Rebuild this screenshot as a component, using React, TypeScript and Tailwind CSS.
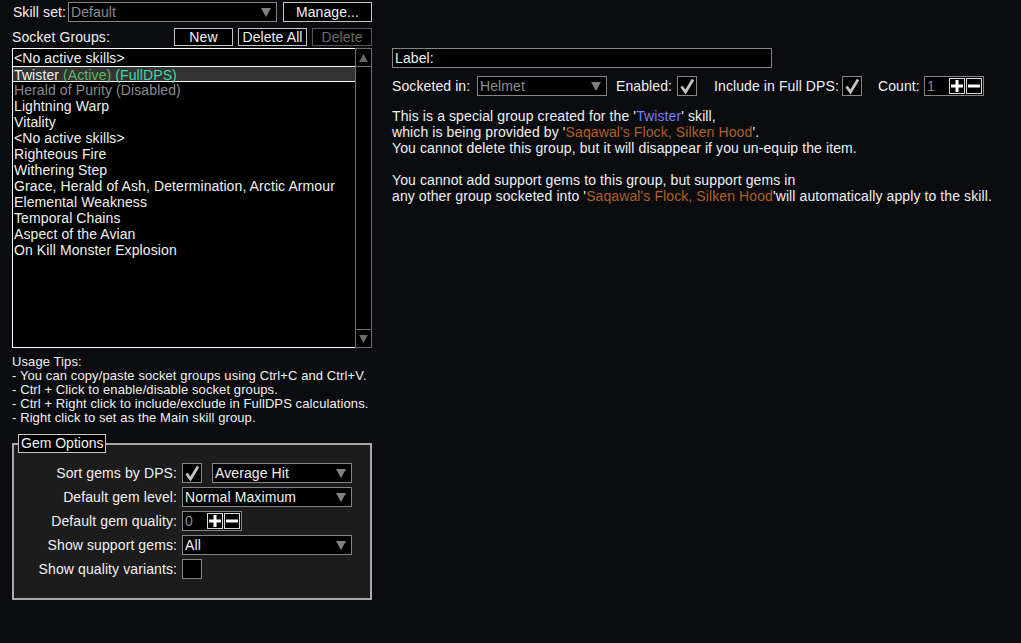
import React from 'react';

type Span = { t: string; c?: string };

const groups: { parts: Span[]; sel?: boolean }[] = [
  { parts: [{ t: '<No active skills>' }] },
  {
    parts: [
      { t: 'Twister' },
      { t: ' (Active)', c: 'text-[#5cb860]' },
      { t: ' (FullDPS)', c: 'text-[#46d6aa]' },
    ],
    sel: true,
  },
  { parts: [{ t: 'Herald of Purity (Disabled)', c: 'text-[#8a8a8a]' }] },
  { parts: [{ t: 'Lightning Warp' }] },
  { parts: [{ t: 'Vitality' }] },
  { parts: [{ t: '<No active skills>' }] },
  { parts: [{ t: 'Righteous Fire' }] },
  { parts: [{ t: 'Withering Step' }] },
  { parts: [{ t: 'Grace, Herald of Ash, Determination, Arctic Armour' }] },
  { parts: [{ t: 'Elemental Weakness' }] },
  { parts: [{ t: 'Temporal Chains' }] },
  { parts: [{ t: 'Aspect of the Avian' }] },
  { parts: [{ t: 'On Kill Monster Explosion' }] },
];

const tips = [
  'Usage Tips:',
  '- You can copy/paste socket groups using Ctrl+C and Ctrl+V.',
  '- Ctrl + Click to enable/disable socket groups.',
  '- Ctrl + Right click to include/exclude in FullDPS calculations.',
  '- Right click to set as the Main skill group.',
];

const Arrow = ({ up, color = '#808080', size = 10 }: { up?: boolean; color?: string; size?: number }) => (
  <svg width={size} height={size - 1} viewBox="0 0 10 9" className="shrink-0">
    <polygon points={up ? '5,0 10,9 0,9' : '0,0 10,0 5,9'} fill={color} />
  </svg>
);

const Dropdown = ({ text, w, dim }: { text: string; w: string; dim?: boolean }) => (
  <div className={`${w} h-5 border border-[#858585] bg-black flex items-center pl-[2px] pr-[5px]`}>
    <span className={`flex-1 leading-[18px] ${dim ? 'text-[#8c8c8c]' : 'text-[#f0f0f0]'}`}>{text}</span>
    <Arrow />
  </div>
);

const Check = ({ on }: { on?: boolean }) => (
  <div className="w-5 h-5 border border-[#858585] bg-black flex items-center justify-center shrink-0">
    {on && (
      <svg width="18" height="18" viewBox="0 0 18 18">
        <polyline points="3.5,9.5 7.5,15 15,2.5" fill="none" stroke="#c4c4c4" strokeWidth="2.8" />
      </svg>
    )}
  </div>
);

const PlusMinus = () => (
  <div className="flex gap-px">
    <div className="w-4 h-4 border border-[#d8d8d8] bg-black flex items-center justify-center">
      <svg width="12" height="12" viewBox="0 0 12 12">
        <rect x="0" y="4.5" width="12" height="3" fill="#fff" />
        <rect x="4.5" y="0" width="3" height="12" fill="#fff" />
      </svg>
    </div>
    <div className="w-4 h-4 border border-[#d8d8d8] bg-black flex items-center justify-center">
      <svg width="12" height="12" viewBox="0 0 12 12">
        <rect x="0" y="4.5" width="12" height="3" fill="#fff" />
      </svg>
    </div>
  </div>
);

const NumBox = ({ value }: { value: string }) => (
  <div className="w-[60px] h-5 border border-[#858585] bg-black flex items-center pl-[2px] pr-[1px]">
    <span className="flex-1 text-[#8c8c8c] leading-[18px]">{value}</span>
    <PlusMinus />
  </div>
);

const Button = ({ label, w, h = 'h-[18px]', off }: { label: string; w: string; h?: string; off?: boolean }) => (
  <div
    className={`${w} ${h} border bg-black flex items-center justify-center leading-none ${
      off ? 'border-[#555] text-[#6a6a6a]' : 'border-[#c4c4c4] text-[#f0f0f0]'
    }`}
  >
    {label}
  </div>
);

const GemRow = ({ label, children }: { label: string; children: React.ReactNode }) => (
  <div className="flex items-center h-5">
    <span className="w-[164px] text-right pr-[1px]">{label}</span>
    <div className="ml-1 flex items-center">{children}</div>
  </div>
);

export default function App() {
  return (
    <div className="w-[1021px] h-[643px] bg-[#0b0c10] text-[#f0f0f0] text-[14px] tracking-[0.1px] font-['Liberation_Sans',Arial,sans-serif] flex overflow-hidden">
      {/* left column */}
      <div className="w-[360px] ml-3 flex flex-col">
        <div className="mt-[2px] flex items-center h-5">
          <span className="w-[56px] text-right pr-[2px]">Skill set:</span>
          <Dropdown text="Default" w="w-[209px]" dim />
          <div className="ml-[6px]">
            <Button label="Manage..." w="w-[89px]" h="h-5" />
          </div>
        </div>

        <div className="mt-[6px] flex items-center h-[18px]">
          <span className="flex-1">Socket Groups:</span>
          <Button label="New" w="w-[59px]" />
          <div className="ml-[5px]">
            <Button label="Delete All" w="w-[69px]" />
          </div>
          <div className="ml-[5px]">
            <Button label="Delete" w="w-[60px]" off />
          </div>
        </div>

        <div className="mt-[2px] h-[300px] border border-white bg-black flex">
          <div className="flex-1 pt-px">
            {groups.map((g, i) => (
              <div
                key={i}
                className={`h-4 pl-px whitespace-nowrap leading-[16px] ${
                  g.sel ? 'bg-[#333] border-y border-white leading-[14px]' : ''
                }`}
              >
                {g.parts.map((p, j) => (
                  <span key={j} className={p.c}>
                    {p.t}
                  </span>
                ))}
              </div>
            ))}
          </div>
          <div className="w-[17px] -my-px -mr-px border border-[#6e6e6e] flex flex-col">
            <div className="h-[18px] border-b border-[#6e6e6e] flex items-center justify-center">
              <Arrow up color="#6a6a6a" size={9} />
            </div>
            <div className="flex-1" />
            <div className="h-[18px] border-t border-[#6e6e6e] flex items-center justify-center">
              <Arrow color="#6a6a6a" size={9} />
            </div>
          </div>
        </div>

        <div className="mt-[7px] text-[13px] leading-[14px] tracking-[0.1px] whitespace-nowrap">
          {tips.map((t) => (
            <div key={t}>{t}</div>
          ))}
        </div>

        <div className="relative mt-[18px] h-[157px] border-2 border-[#a8a8a8] bg-[#1c1c1c] pt-[18px] flex flex-col gap-1">
          <div className="absolute -top-[11px] left-[4px] h-[19px] px-[2px] border border-[#c8c8c8] bg-black flex items-center tracking-normal">
            Gem Options
          </div>
          <GemRow label="Sort gems by DPS:">
            <Check on />
            <div className="ml-[10px]">
              <Dropdown text="Average Hit" w="w-[140px]" />
            </div>
          </GemRow>
          <GemRow label="Default gem level:">
            <Dropdown text="Normal Maximum" w="w-[170px]" />
          </GemRow>
          <GemRow label="Default gem quality:">
            <NumBox value="0" />
          </GemRow>
          <GemRow label="Show support gems:">
            <Dropdown text="All" w="w-[170px]" />
          </GemRow>
          <GemRow label="Show quality variants:">
            <Check />
          </GemRow>
        </div>
      </div>

      {/* right column */}
      <div className="ml-5 mt-[48px] flex flex-col">
        <div className="w-[380px] h-5 border border-[#858585] bg-black flex items-center pl-[2px] leading-[18px]">
          Label:
        </div>

        <div className="mt-2 flex items-center h-5">
          <span className="w-[85px]">Socketed in:</span>
          <Dropdown text="Helmet" w="w-[130px]" dim />
          <span className="ml-[9px] w-[61px]">Enabled:</span>
          <Check on />
          <span className="ml-[17px] w-[128px]">Include in Full DPS:</span>
          <Check on />
          <span className="ml-[16px] w-[46px]">Count:</span>
          <NumBox value="1" />
        </div>

        <div className="mt-3 leading-4 whitespace-nowrap">
          <div>
            This is a special group created for the '<span className="text-[#7b7bff]">Twister</span>' skill,
          </div>
          <div>
            which is being provided by '<span className="text-[#af6025]">Saqawal's Flock, Silken Hood</span>'.
          </div>
          <div>You cannot delete this group, but it will disappear if you un-equip the item.</div>
          <div className="h-4" />
          <div>You cannot add support gems to this group, but support gems in</div>
          <div>
            any other group socketed into '<span className="text-[#af6025]">Saqawal's Flock, Silken Hood</span>'will
            automatically apply to the skill.
          </div>
        </div>
      </div>
    </div>
  );
}
